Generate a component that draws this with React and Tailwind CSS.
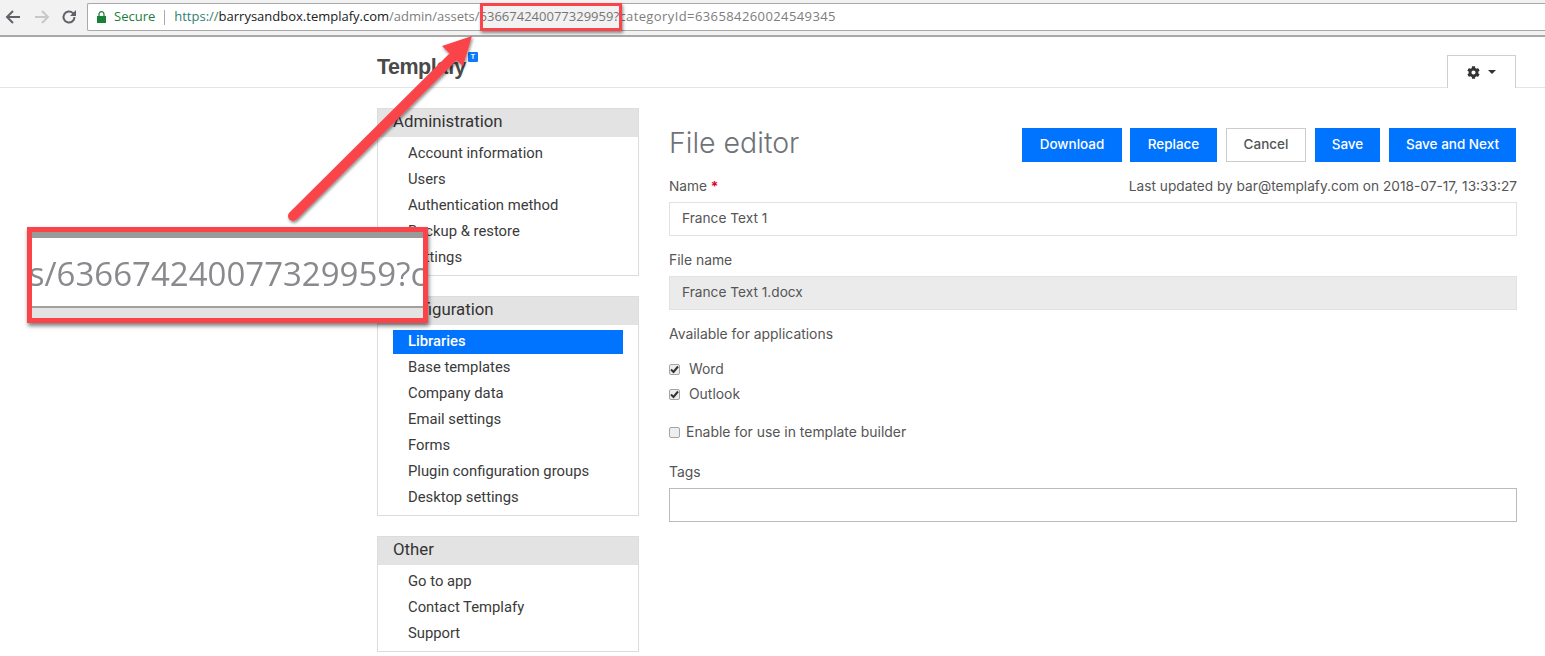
import { FaCog } from "react-icons/fa"

const SECTIONS = [
  { title: "Administration", items: ["Account information", "Users", "Authentication method", "Backup & restore", "Settings"] },
  { title: "Configuration", items: ["Libraries", "Base templates", "Company data", "Email settings", "Forms", "Plugin configuration groups", "Desktop settings"] },
  { title: "Other", items: ["Go to app", "Contact Templafy", "Support"] }
]

const ACTIONS = [
  { label: "Download", width: "w-[100px] mr-[-1px]" },
  { label: "Replace", width: "w-[87px]" },
  { label: "Cancel", width: "w-[80px]" },
  { label: "Save", width: "w-[65px]" },
  { label: "Save and Next", width: "w-[127px]" }
]

function Browser() {
  return (
    <div className="h-[37px] bg-[#f2f2f2] border-b-2 border-[#a9a9a9] flex items-start pt-[3px] font-['Open_Sans',sans-serif]">
      <div className="flex items-center h-[28px] w-[87px] pl-[5px] text-[#5f6368]">
        <svg width="16" height="16" viewBox="0 0 16 16" fill="none" stroke="currentColor" strokeWidth="2">
          <path d="M15 8H2M8 2L2 8l6 6" />
        </svg>
        <svg className="ml-[13px] text-[#c8c8c8]" width="16" height="16" viewBox="0 0 16 16" fill="none" stroke="currentColor" strokeWidth="2">
          <path d="M1 8h13M8 2l6 6-6 6" />
        </svg>
        <svg className="ml-[11px]" width="16" height="16" viewBox="0 0 16 16" fill="none" stroke="currentColor" strokeWidth="2">
          <path d="M13.5 8a5.5 5.5 0 1 1-1.6-3.9L14 6" />
          <path d="M15 1v6H9z" fill="currentColor" stroke="none" />
        </svg>
      </div>
      <div className="flex-1 h-[28px] bg-white border border-[#a9a9a9] border-r-0 rounded-l-[2px] flex items-center text-[13px] whitespace-nowrap">
        <svg className="ml-[9px]" width="9" height="12" viewBox="0 0 9 12">
          <path d="M0 5h9v7H0z" fill="#188038" />
          <path d="M2 5V3.2a2.5 2.5 0 0 1 5 0V5" fill="none" stroke="#188038" strokeWidth="1.2" />
        </svg>
        <span className="ml-[8px] text-[#1c7c3c]">Secure</span>
        <span className="ml-[9px] w-px h-[15px] bg-[#aaa]" />
        <span className="ml-[9px] text-[#2f7f6f]">https://</span>
        <span className="text-[#202020]">barrysandbox.templafy.com</span>
        <span className="text-[#7d7d7d]">/admin/assets/636674240077329959</span>
        <span className="text-[#7d7d7d] tracking-[0.4px]">?categoryId=636584260024549345</span>
      </div>
    </div>
  )
}

function Header() {
  return (
    <header className="h-[51px] border-b border-[#e4e4e4] relative flex items-start">
      <div className="ml-[377px] mt-[15px] flex items-start">
        <span className="font-['Liberation_Sans',sans-serif] font-bold text-[21.5px] leading-[30px] tracking-[-0.5px] text-[#4a4a4a]">Templafy</span>
        <span className="ml-[2px] w-[10px] h-[10px] bg-[#0a7bff] rounded-[1px] text-white text-[7px] leading-[10px] font-bold text-center font-['Liberation_Sans',sans-serif]">T</span>
      </div>
      <div className="ml-auto mr-[29px] mt-[18px] w-[69px] h-[33px] bg-white border border-b-0 border-[#cfcfcf] flex items-center justify-center gap-[8px] text-[#333]">
        <FaCog size={13} />
        <span className="w-0 h-0 border-x-[4px] border-x-transparent border-t-[4px] border-t-[#333]" />
      </div>
    </header>
  )
}

function Sidebar() {
  return (
    <aside className="w-[262px] flex flex-col gap-[20px] font-['Roboto',sans-serif]">
      {SECTIONS.map((section) => (
        <div key={section.title} className="border border-[#dcdcdc] pb-[4px]">
          <h3 className="h-[28px] bg-[#e3e3e3] pl-[15px] text-[16.8px] leading-[24px] text-[#333]">{section.title}</h3>
          <ul className="pt-[4px] px-[15px]">
            {section.items.map((item) =>
              item === "Libraries" ? (
                <li key={item} className="h-[24px] my-[1px] pl-[15px] text-[14.8px] leading-[22px] font-medium bg-[#0073ff] text-white">
                  {item}
                </li>
              ) : (
                <li key={item} className="h-[26px] pl-[15px] text-[14.8px] leading-[24px] text-[#3a3a3a]">
                  {item}
                </li>
              )
            )}
          </ul>
        </div>
      ))}
    </aside>
  )
}

function CheckRow({ label, checked, className }) {
  return (
    <div className={`flex items-center ${className}`}>
      <span className="w-[11px] h-[11px] rounded-[2px] border border-[#a5a5a5] bg-[#eee] flex items-center justify-center">
        {checked && (
          <svg width="9" height="9" viewBox="0 0 9 9" fill="none" stroke="#333" strokeWidth="2">
            <path d="M1 4.5l2.5 2.5L8 1.5" />
          </svg>
        )}
      </span>
      <span className="ml-[9px]">{label}</span>
    </div>
  )
}

function Editor() {
  return (
    <main className="w-[848px] ml-[30px] font-['Inter',sans-serif] text-[13.7px] text-[#555]">
      <div className="flex items-center justify-between mt-[20px] h-[34px]">
        <h1 className="text-[28.5px] font-light pb-[4px] text-[#6f7377]">File editor</h1>
        <div className="flex gap-[9px] mr-[1px]">
          {ACTIONS.map((action) => (
            <button
              key={action.label}
              className={`h-[34px] pb-[2px] text-[13.5px] font-medium ${action.width} ${action.label === "Cancel" ? "bg-white border border-[#ccc] text-[#555]" : "bg-[#0073ff] text-white"}`}
            >
              {action.label}
            </button>
          ))}
        </div>
      </div>
      <div className="flex justify-between mt-[16px] h-[24px] leading-[16px]">
        <span>Name <span className="text-[#e0002b] font-bold">*</span></span>
        <span>Last updated by bar@templafy.com on 2018-07-17, 13:33:27</span>
      </div>
      <div className="h-[34px] border border-[#e2e2e2] pl-[12px] leading-[31px]">France Text 1</div>
      <p className="mt-[15px] h-[25px] leading-[19px] text-[13.9px]">File name</p>
      <div className="h-[34px] border border-[#e2e2e2] bg-[#ebebeb] pl-[12px] leading-[31px]">France Text 1.docx</div>
      <p className="mt-[15px] leading-[19px] text-[13.9px]">Available for applications</p>
      <CheckRow label="Word" checked className="mt-[17px] h-[17px] text-[13.9px]" />
      <CheckRow label="Outlook" checked className="mt-[8px] h-[17px] text-[13.9px]" />
      <div className="flex items-center mt-[21px] h-[17px] text-[13.95px]">
        <span className="w-[11px] h-[11px] rounded-[2px] border border-[#a5a5a5] bg-[#eee]" />
        <span className="ml-[6px]">Enable for use in template builder</span>
      </div>
      <p className="mt-[23px] h-[24px] leading-[17px] text-[13.9px]">Tags</p>
      <div className="h-[34px] border border-[#bbb]" />
    </main>
  )
}

export default function App() {
  return (
    <div className="relative w-[1545px] h-[656px] overflow-hidden bg-white">
      <Browser />
      <Header />
      <div className="flex pl-[377px] pt-[20px]">
        <Sidebar />
        <Editor />
      </div>

      {/* annotations on top of the screenshot */}
      <div className="absolute left-[480px] top-[3px] w-[142px] h-[28px] border-[3px] border-[#f94449] bg-black/5 shadow-[1px_2px_3px_rgba(0,0,0,0.45)]" />
      <svg className="absolute left-0 top-0" width="1545" height="656">
        <defs>
          <filter id="sh" x="-20%" y="-20%" width="140%" height="140%">
            <feDropShadow dx="1" dy="2" stdDeviation="1.5" floodColor="#000" floodOpacity="0.45" />
          </filter>
        </defs>
        <g filter="url(#sh)" fill="#f94449">
          <path d="M293 216 L452 58" stroke="#f94449" strokeWidth="10" strokeLinecap="round" />
          <path d="M472 36 L442 46 L452 56 L456 60 L463 66 Z" />
        </g>
      </svg>
      <div className="absolute left-[27px] top-[227px] w-[401px] h-[96px] border-[5px] border-[#f94449] bg-white shadow-[1px_3px_4px_rgba(0,0,0,0.5)] flex flex-col overflow-hidden">
        <div className="h-[6px] bg-[#9a9a9a]" />
        <div className="flex-1 flex items-center justify-center pt-[3px] overflow-hidden whitespace-nowrap font-['Open_Sans',sans-serif] text-[33px] text-[#8a8a8e] blur-[0.5px]">
          s/636674240077329959?c
        </div>
        <div className="h-[12px] border-t-2 border-[#a0a0a0] bg-[#e3e3e3]" />
      </div>
    </div>
  )
}
